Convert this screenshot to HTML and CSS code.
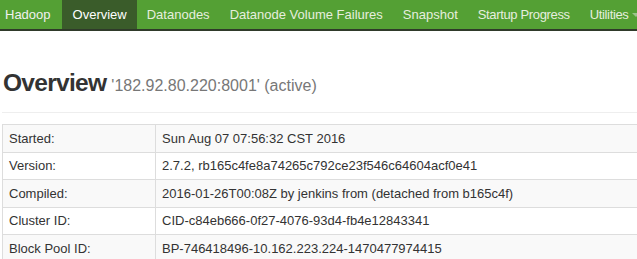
FILE: index.html
```
<!DOCTYPE html>
<html>
<head>
<meta charset="utf-8">
<link rel="stylesheet" href="styles.css">
</head>
<body>
<nav class="navbar">
  <a class="brand">Hadoop</a>
  <a class="item active">Overview</a>
  <a class="item">Datanodes</a>
  <a class="item">Datanode Volume Failures</a>
  <a class="item">Snapshot</a>
  <a class="item tight">Startup Progress</a>
  <a class="item tight">Utilities<span class="caret"></span></a>
</nav>
<div class="container">
  <div class="page-header">
    <h1>Overview<small>'182.92.80.220:8001' (active)</small></h1>
  </div>
  <table class="info">
    <tr><th>Started:</th><td>Sun Aug 07 07:56:32 CST 2016</td></tr>
    <tr><th>Version:</th><td>2.7.2, rb165c4fe8a74265c792ce23f546c64604acf0e41</td></tr>
    <tr><th>Compiled:</th><td>2016-01-26T00:08Z by jenkins from (detached from b165c4f)</td></tr>
    <tr><th>Cluster ID:</th><td>CID-c84eb666-0f27-4076-93d4-fb4e12843341</td></tr>
    <tr><th>Block Pool ID:</th><td>BP-746418496-10.162.223.224-1470477974415</td></tr>
  </table>
</div>
</body>
</html>
```
FILE: styles.css
```
html, body {
  margin: 0;
  padding: 0;
  background: #fff;
  overflow: hidden;
}
body {
  font-family: "Liberation Sans", Arial, sans-serif;
  width: 637px;
  height: 259px;
  overflow: hidden;
}
.navbar {
  display: flex;
  align-items: stretch;
  height: 29px;
  background: #54a034;
  border-bottom: 2px solid #2f3a2a;
  white-space: nowrap;
  overflow: hidden;
}
.navbar a {
  display: flex;
  align-items: center;
  flex-shrink: 0;
  color: #e6eedf;
  font-size: 13px;
  padding: 0 10px;
  text-decoration: none;
}
.navbar .item.tight {
  letter-spacing: -0.35px;
}
.navbar .brand {
  padding: 0 11px 0 5px;
  color: #f0f0f0;
}
.navbar .item.active {
  background: #3a5c2a;
  color: #fff;
  padding: 0 10px 0 11px;
}
.caret {
  display: inline-block;
  width: 0;
  height: 0;
  margin-left: 4px;
  border-top: 4px solid #9cc48a;
  border-left: 4px solid transparent;
  border-right: 4px solid transparent;
}
.container {
  padding: 0 0 0 2px;
  overflow: hidden;
}
.page-header {
  margin: 0 0 11px 0;
  padding: 37px 0 11px 1px;
  border-bottom: 1px solid #eee;
}
h1 {
  margin: 0;
  font-family: "Liberation Sans", Arial, sans-serif;
  font-size: 24.5px;
  letter-spacing: -0.7px;
  font-weight: bold;
  color: #333;
  line-height: 30px;
}
h1 small {
  font-size: 16px;
  letter-spacing: 0;
  font-weight: normal;
  color: #777;
  margin-left: 5px;
}
table.info {
  border-collapse: collapse;
  width: 700px;
  font-size: 13px;
  color: #333;
}
table.info th, table.info td {
  border: 1px solid #ddd;
  text-align: left;
  font-weight: normal;
  padding: 0 6px;
  height: 26.5px;
  white-space: nowrap;
}
table.info th {
  width: 140px;
}
table.info tr:nth-child(odd) {
  background: #f9f9f9;
}
```
